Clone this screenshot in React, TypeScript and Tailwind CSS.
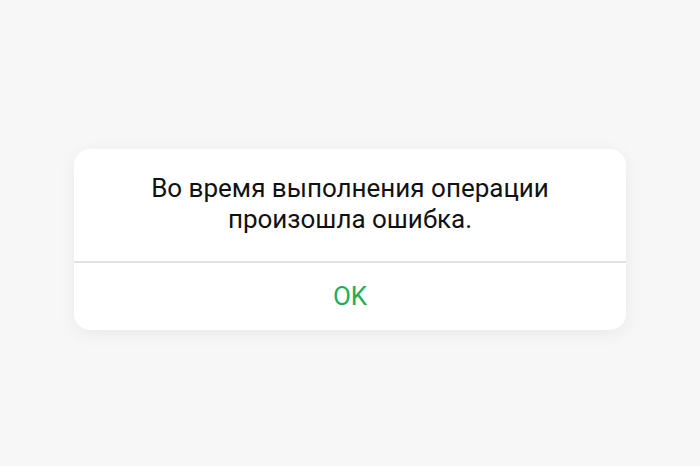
export default function App() {
  return (
    <div
      className="w-[700px] h-[466px] flex flex-col items-center pt-[149px] bg-[#f7f7f7]"
      style={{ fontFamily: "Roboto, 'Noto Sans', sans-serif" }}
    >
      <div className="w-[552px] bg-white rounded-[16px] shadow-[0_4px_18px_rgba(0,0,0,0.06)] overflow-hidden">
        <div className="h-[112px] flex items-center justify-center px-6">
          <p className="text-center text-[26px] leading-[31px] text-[#111] pb-[3px]">
            Во время выполнения операции
            <br />
            произошла ошибка.
          </p>
        </div>
        <div className="h-[2px] bg-[#e2e2e2]" />
        <button className="w-full h-[67px] flex items-center justify-center text-[26px] text-[#1fae56]">
          OK
        </button>
      </div>
    </div>
  )
}
